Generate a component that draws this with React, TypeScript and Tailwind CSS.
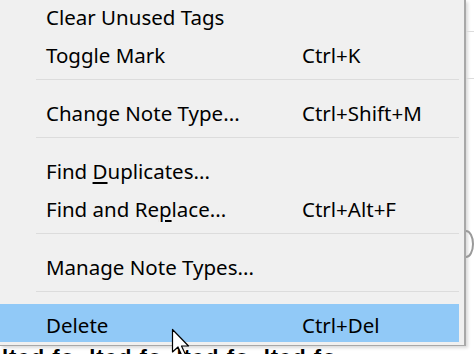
import React from "react";

type Entry =
  | { kind: "item"; label: React.ReactNode; shortcut?: string; active?: boolean }
  | { kind: "sep" };

const entries: Entry[] = [
  { kind: "item", label: "Clear Unused Tags" },
  { kind: "item", label: "Toggle Mark", shortcut: "Ctrl+K" },
  { kind: "sep" },
  { kind: "item", label: "Change Note Type...", shortcut: "Ctrl+Shift+M" },
  { kind: "sep" },
  {
    kind: "item",
    label: (
      <>
        Find <span className="underline underline-offset-[3px]">D</span>uplicates...
      </>
    ),
  },
  {
    kind: "item",
    label: (
      <>
        Find and Re<span className="underline underline-offset-[3px]">p</span>lace...
      </>
    ),
    shortcut: "Ctrl+Alt+F",
  },
  { kind: "sep" },
  { kind: "item", label: "Manage Note Types..." },
  { kind: "sep" },
  { kind: "item", label: "Delete", shortcut: "Ctrl+Del", active: true },
];

const MenuRow: React.FC<{ entry: Entry }> = ({ entry }) => {
  if (entry.kind === "sep") {
    return (
      <div className="h-[20px] pt-[7px]">
        <div className="ml-[36px] mr-[5px] h-px bg-[#dcdcdc]" />
      </div>
    );
  }
  return (
    <div
      className={`grid h-[38px] grid-cols-[302px_1fr] items-center pt-[4px] mr-[5px] ${
        entry.active ? "bg-[#91c9f7]" : ""
      }`}
    >
      <span className="pl-[46px] whitespace-nowrap">{entry.label}</span>
      <span className="whitespace-nowrap">{entry.shortcut}</span>
    </div>
  );
};

const Cursor = () => (
  <svg
    className="absolute left-[171px] top-[328px]"
    width="22"
    height="32"
    viewBox="0 0 22 32"
  >
    <path
      d="M1.5 1.5 L1.5 24 L7 19 L11 28 L14.5 26.5 L10.5 18 L17.5 18 Z"
      fill="#ffffff"
      stroke="#000000"
      strokeWidth="1.2"
      strokeLinejoin="round"
    />
  </svg>
);

export default function App() {
  return (
    <div
      className="relative h-[354px] w-[474px] overflow-hidden bg-white text-[20.5px] text-black"
      style={{ fontFamily: '"Noto Sans", "Open Sans", sans-serif' }}
    >
      <div className="flex h-[346px]">
        <div className="w-[466px] border-r-2 border-b border-[#a8a8a8] bg-[#f0f0f0] shadow-[2px_2px_3px_rgba(0,0,0,0.15)]">
          <div className="-mt-[4px]">
            {entries.map((e, i) => (
              <MenuRow key={i} entry={e} />
            ))}
          </div>
        </div>
        <div className="flex flex-1 flex-col">
          <div className="h-[32px] border-b border-[#dcdcdc]" />
          <div className="h-[47px] border-b border-[#dcdcdc]" />
          <div className="relative h-[150px]">
            <svg className="absolute left-0 top-[151px]" width="8" height="28" viewBox="0 0 8 28">
              <path d="M0 1 A7 13 0 0 1 0 27" fill="none" stroke="#9a9a9a" strokeWidth="2" />
            </svg>
          </div>
        </div>
      </div>
      <div className="h-[8px] overflow-hidden">
        <div
          className="mt-[1px] whitespace-nowrap pl-[2px] text-[22px] font-bold leading-none tracking-[1px]"
          style={{ fontFamily: '"Liberation Sans", sans-serif' }}
        >
          lted fo&nbsp;&nbsp;lted fo&nbsp;&nbsp;lted fo&nbsp;&nbsp;lted fo
        </div>
      </div>
      <Cursor />
    </div>
  );
}
